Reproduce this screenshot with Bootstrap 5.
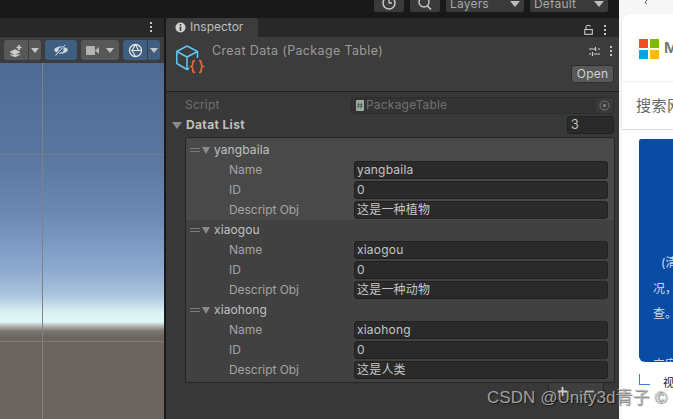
<!DOCTYPE html>
<html lang="en">
<head>
<meta charset="utf-8">
<title>Inspector</title>
<link rel="stylesheet" href="https://cdn.jsdelivr.net/npm/bootstrap@5.3.0/dist/css/bootstrap.min.css">
<style>
html,body{margin:0;height:419px;overflow:hidden}
body{background:#191919;font:12px/1.2 Inter,"Noto Sans CJK SC",sans-serif;color:#b8b8b8;position:relative;letter-spacing:.2px}
.ed{width:619px;height:419px;flex:none}
.topb{height:18px;padding-right:11px;gap:6px;flex:none}
.tb{height:12px;background:#3a3a3a;border-radius:0 0 2px 2px;overflow:hidden;color:#a8a8a8;display:flex;justify-content:space-between;line-height:8px;padding:0 4px;align-items:flex-start}
.tb-i{width:30px;justify-content:center}
.tb-d{width:78px;padding-top:0}
.tri{width:0;height:0;border-left:5px solid transparent;border-right:5px solid transparent;border-top:6px solid #bcbcbc;display:inline-block;flex:none}
.tb .tri{margin-top:1px}
.panes{flex:1;min-height:0;gap:2px}
.scene{width:164px;flex:none;background:#282828}
.tabbar{height:19px;background:#282828;border-radius:3px 3px 0 0;flex:none}
.s-tab{border-bottom:1px solid #222;padding-right:12px}
.dots{display:flex;flex-direction:column;gap:2px;width:2px}
.dots i{width:2px;height:2px;background:#c4c4c4;display:block}
.s-tools{height:26px;background:#3c3c3c;padding:3px 4px;gap:4px;flex:none;border-bottom:0}
.sb{height:20px;border-radius:3px;background:#585858;display:flex;align-items:center}
.sb-blue{background:#3f5f80}
.sb-a{width:25px;justify-content:center;border-right:1px solid #3c3c3c;height:100%;display:flex;align-items:center}
.sb-b{flex:1;display:flex;justify-content:center}
.sb .tri{border-top-color:#c4c4c4;border-left-width:4px;border-right-width:4px;border-top-width:5px}
.sb-w37{width:37px}
.sb-w32{width:32px}
.sb-cam{width:38px;padding-left:5px;gap:7px}
.sky{flex:1;background:
 linear-gradient(#7f8388,#7f8388) 42px 0/1px 100% no-repeat,
 linear-gradient(#6f7f90,#6f7f90) 0 91px/100% 1px no-repeat,
 linear-gradient(#837b74,#837b74) 0 278px/100% 1px no-repeat,
 linear-gradient(#4f6a92 0,#5a769f 91px,#6a88b3 150px,#8ba8cf 205px,#aac4dd 232px,#dcf2f3 250px,#e0f5f5 259px,#b3b8b3 263px,#7c7670 268px,#6c645e 274px,#6c645e 100%)}
.insp{width:453px;flex:none;background:#282828;display:flex;flex-direction:column}
.tab-i{width:92px;height:19px;background:#3c3c3c;border-radius:3px 3px 0 0;color:#bdbdbd;gap:4px;padding-left:9px;display:flex;align-items:center;font-size:12px;letter-spacing:0}
.tab-r{gap:11px;padding:6px 13px 0 0}
.ihead{height:55px;background:#3c3c3c;border-bottom:1px solid #1f1f1f;padding:0 5px 0 10px;flex:none}
.ico{width:30px;flex:none;margin-top:7px}
.ttl{margin-left:6px;padding-top:6px;color:#9b9b9b;font-size:12.5px;letter-spacing:.35px;flex:1}
.hd-r{width:60px}
.hd-ic{gap:10px;padding:8px 2px 0 0;height:20px}
.btn-open{height:18px;width:43px;background:#585858;border:1px solid #2f2f2f;color:#d0d0d0;font-size:12px;line-height:14px;padding:0;border-radius:3px;margin-top:8px;letter-spacing:.2px}
.ibody{flex:1;background:#383838;padding:5px 5px 0 19px;min-height:0}
.script{height:16px;color:#707070;margin-bottom:2px}
.lbl-s{width:166px;flex:none;line-height:16px}
.s-f{flex:1;background:#333;border:1px solid #2d2d2d;border-radius:3px;height:17px;display:flex;align-items:center;padding-left:3px;color:#707070;gap:1px}
.s-dot{margin-left:auto;width:17px;height:15px;background:#3a3a3a;display:flex;align-items:center;justify-content:center}
.dl{height:20px;margin-left:-13px}
.dl .tri{border-top-color:#8a8a8a;border-top-width:7px}
.dl-t{font-weight:700;color:#c0c0c0;margin-left:4px;letter-spacing:.35px}
.cnt{margin-left:auto;width:47px;height:18px;background:#2a2a2a;border:1px solid #212121;border-radius:3px;padding-left:3px;line-height:16px;color:#c4c4c4;font-size:12.5px}
.lbox{height:246px;margin-top:2px;border:1px solid #252525;border-radius:3px;background:#414141;width:430px;overflow:hidden;padding-top:2px;box-sizing:border-box}
.grp{height:80px}
.grp1{background:#494949;margin-top:-2px;padding-top:2px;height:82px}
.hrow{height:20px;padding-left:4px;color:#c0c0c0;letter-spacing:.1px}
.grip{width:10px;height:4px;border-top:1px solid #7a7a7a;border-bottom:1px solid #7a7a7a;flex:none}
.hrow .tri{border-left-width:4px;border-right-width:4px;border-top:7px solid #8a8a8a;margin:0 4px 0 2px}
.frow{height:20px;padding-left:43px;color:#a4a4a4;letter-spacing:-.05px}
.flbl{width:125px;flex:none}
.fin{width:254px;height:18px;background:#2a2a2a;border:1px solid #212121;border-radius:3px;padding-left:2px;line-height:16px;color:#c4c4c4;letter-spacing:.2px}
.foot{width:56px;height:18px;margin-left:363px;border:1px solid #252525;border-top:0;border-radius:0 0 3px 3px;background:#3f3f3f}
.web{flex:1;background:#f7f7f7;min-width:0;overflow:hidden;padding:0 0 0 3px}
.web-nav{height:14px;flex:none;padding-left:22px}
.web-top{height:115px;background:#fff;border-radius:8px 0 0 0;box-shadow:0 1px 2px rgba(0,0,0,.18);flex:none}
.logo-r{height:68px;padding-left:17px;border-bottom:1px solid #eee;gap:5px;color:#737373;font-size:15px;font-weight:600}
.ms{display:grid;grid-template-columns:9px 9px;gap:2px;flex:none;margin-top:2px}
.ms i{display:block;width:9px;height:9px}
.ms-r{background:#f25022}
.ms-g{background:#7fba00}
.ms-b{background:#00a4ef}
.ms-y{background:#ffb900}
.search{padding:15px 0 0 14px;font-size:15px;color:#666;white-space:nowrap;letter-spacing:.5px}
.web-mid{background:#fff;flex:1;margin-top:1px;padding:9px 0 0 17px;min-height:0}
.bluec{height:223px;background:#0a4ca3;border-radius:2px 0 0 6px;color:#c9dcef;padding:111px 0 0 14px;font-size:12px;line-height:25.5px;white-space:nowrap;overflow:hidden;letter-spacing:0;flex:none}
.blue-1{margin-left:8px}
.leg{height:46px;margin-top:12px;color:#222;font-size:11px;gap:13px;white-space:nowrap}
.leg-t{margin-top:3px}
.crn{width:11px;height:11px;border-left:1px solid #3b82d8;border-bottom:1px solid #3b82d8;flex:none}
.wm{position:absolute;left:487px;top:388px;font:17px/1.2 "Liberation Sans","Noto Sans CJK SC",sans-serif;color:rgba(190,190,190,.82);text-shadow:1px 1px 1px rgba(0,0,0,.55);white-space:nowrap;letter-spacing:.05px}
</style>
</head>
<body class="d-flex">
<div class="ed d-flex flex-column">
  <div class="topb d-flex justify-content-end">
    <div class="tb tb-i"><svg width="16" height="12" viewBox="0 0 16 12"><circle cx="8" cy="3" r="6" fill="none" stroke="#c8c8c8" stroke-width="1.5"/><path d="M8 0v3h3" fill="none" stroke="#c8c8c8" stroke-width="1.3"/></svg></div>
    <div class="tb tb-i"><svg width="16" height="12" viewBox="0 0 16 12"><circle cx="7" cy="2" r="5" fill="none" stroke="#c8c8c8" stroke-width="1.4"/><path d="M10.5 6l3.5 3.5" stroke="#c8c8c8" stroke-width="1.6"/></svg></div>
    <div class="tb tb-d"><span>Layers</span><span class="tri"></span></div>
    <div class="tb tb-d"><span>Default</span><span class="tri"></span></div>
  </div>
  <div class="panes d-flex">
    <div class="scene d-flex flex-column">
      <div class="tabbar s-tab d-flex justify-content-end align-items-center"><div class="dots"><i></i><i></i><i></i></div></div>
      <div class="s-tools d-flex">
        <div class="sb sb-w37"><span class="sb-a"><svg width="14" height="13" viewBox="0 0 14 13"><path d="M1 8l5-2.5L11 8l-5 2.500zM1 10.500l5 2.500 5-2.500" fill="#cfcfcf" stroke="#cfcfcf" stroke-width=".6"/><path d="M10 1v5M7.500 3.500h5" stroke="#cfcfcf" stroke-width="1.600"/></svg></span><span class="sb-b"><span class="tri"></span></span></div>
        <div class="sb sb-blue sb-w32 justify-content-center"><svg width="16" height="12" viewBox="0 0 16 12"><path d="M1 6c3-5 11-5 14 0-3 5-11 5-14 0z" fill="#cfd6dd"/><circle cx="8" cy="6" r="2.500" fill="#3f5f80"/><path d="M3 11L12 1" stroke="#3f5f80" stroke-width="2.500"/><path d="M2.500 11.500L12 1" stroke="#dfe4ea" stroke-width="1"/></svg></div>
        <div class="sb sb-cam"><svg width="13" height="9" viewBox="0 0 13 9"><rect width="9" height="9" rx="1" fill="#b4b4b4"/><path d="M9 4.500L13 1v7z" fill="#b4b4b4"/></svg><span class="tri"></span></div>
        <div class="sb sb-blue sb-w37"><span class="sb-a"><svg width="15" height="15" viewBox="0 0 15 15"><circle cx="7.500" cy="7.500" r="6" fill="none" stroke="#e8e8e8" stroke-width="1.300"/><path d="M7.500 1.500L4 7.500l3.500 6M4 7.500h9.500M7.500 1.500l3 6" fill="none" stroke="#e8e8e8" stroke-width="1.100"/></svg></span><span class="sb-b"><span class="tri"></span></span></div>
      </div>
      <div class="sky"></div>
    </div>
    <div class="insp">
      <div class="tabbar d-flex justify-content-between align-items-start">
        <div class="tab-i"><svg width="11" height="11" viewBox="0 0 11 11"><circle cx="5.500" cy="5.500" r="5" fill="#d2d2d2"/><rect x="4.700" y="2" width="1.600" height="1.600" fill="#3c3c3c"/><rect x="4.700" y="4.500" width="1.600" height="4.500" fill="#3c3c3c"/></svg><span>Inspector</span></div>
        <div class="tab-r d-flex align-items-center"><svg width="9" height="11" viewBox="0 0 9 11"><path d="M2 5V3c0-2.300 4-2.300 4.500-.5" fill="none" stroke="#c8c8c8" stroke-width="1.100"/><rect x=".8" y="5.500" width="7.500" height="4.800" fill="none" stroke="#c8c8c8" stroke-width="1.100"/></svg><div class="dots"><i></i><i></i><i></i></div></div>
      </div>
      <div class="ihead d-flex">
        <div class="ico"><svg width="30" height="30" viewBox="0 0 30 30"><path d="M11 2l10.500 5.500v12L11 25.500.8 19.500V7.500zM.8 7.500L11 13l10.500-5.500M11 13v12.500" fill="none" stroke="#62c8f2" stroke-width="1.500" stroke-linejoin="round"/><rect x="13" y="14" width="17" height="16" fill="#3c3c3c"/><path d="M19 16.500c-2 0-2.300 1-2.300 2.500v1.500c0 1-.5 1.500-1.700 2 1.200.5 1.700 1 1.700 2V26c0 1.500.3 2.500 2.300 2.500M23 16.500c2 0 2.300 1 2.300 2.500v1.500c0 1 .5 1.500 1.700 2-1.200.5-1.700 1-1.700 2V26c0 1.500-.3 2.500-2.300 2.500" fill="none" stroke="#f0653a" stroke-width="1.700"/></svg></div>
        <div class="ttl">Creat Data (Package Table)</div>
        <div class="hd-r d-flex flex-column align-items-end">
          <div class="hd-ic d-flex align-items-center"><svg width="11" height="11" viewBox="0 0 11 11"><path d="M0 3h6M9 3h2M0 8h2M5 8h6M6.500 1v4M3.500 6v4" stroke="#d0d0d0" stroke-width="1.200" fill="none"/></svg><div class="dots"><i></i><i></i><i></i></div></div>
          <button class="btn btn-open" type="button">Open</button>
        </div>
      </div>
      <div class="ibody">
        <div class="script d-flex">
          <div class="lbl-s">Script</div>
          <div class="s-f"><svg width="10" height="11" viewBox="0 0 10 11"><rect x="1" width="8" height="11" rx="1" fill="#a8a8a8"/><path d="M3.500 2.500l-.5 6M6.500 2.500l-.5 6M2.500 4.500h5M2.500 6.500h5" stroke="#2f6a3f" stroke-width=".9"/></svg><span>PackageTable</span><span class="s-dot"><svg width="11" height="11" viewBox="0 0 11 11"><circle cx="5.500" cy="5.500" r="4.500" fill="none" stroke="#777" stroke-width="1"/><circle cx="5.500" cy="5.500" r="1.800" fill="#777"/></svg></span></div>
        </div>
        <div class="dl d-flex align-items-center">
          <span class="tri"></span><span class="dl-t">Datat List</span><span class="cnt">3</span>
        </div>
        <div class="lbox">
          <div class="grp grp1">
            <div class="hrow d-flex align-items-center"><span class="grip"></span><span class="tri"></span>yangbaila</div>
            <div class="frow d-flex align-items-center"><span class="flbl">Name</span><span class="fin">yangbaila</span></div>
            <div class="frow d-flex align-items-center"><span class="flbl">ID</span><span class="fin">0</span></div>
            <div class="frow d-flex align-items-center"><span class="flbl">Descript Obj</span><span class="fin">这是一种植物</span></div>
          </div>
          <div class="grp">
            <div class="hrow d-flex align-items-center"><span class="grip"></span><span class="tri"></span>xiaogou</div>
            <div class="frow d-flex align-items-center"><span class="flbl">Name</span><span class="fin">xiaogou</span></div>
            <div class="frow d-flex align-items-center"><span class="flbl">ID</span><span class="fin">0</span></div>
            <div class="frow d-flex align-items-center"><span class="flbl">Descript Obj</span><span class="fin">这是一种动物</span></div>
          </div>
          <div class="grp">
            <div class="hrow d-flex align-items-center"><span class="grip"></span><span class="tri"></span>xiaohong</div>
            <div class="frow d-flex align-items-center"><span class="flbl">Name</span><span class="fin">xiaohong</span></div>
            <div class="frow d-flex align-items-center"><span class="flbl">ID</span><span class="fin">0</span></div>
            <div class="frow d-flex align-items-center"><span class="flbl">Descript Obj</span><span class="fin">这是人类</span></div>
          </div>
        </div>
        <div class="foot d-flex justify-content-around align-items-center"><svg width="9" height="9" viewBox="0 0 9 9"><path d="M4.500 0v9M0 4.500h9" stroke="#d0d0d0" stroke-width="1.800"/></svg><svg width="9" height="9" viewBox="0 0 9 9"><path d="M0 4.500h9" stroke="#b4b4b4" stroke-width="1.800"/></svg></div>
      </div>
    </div>
  </div>
</div>
<div class="web d-flex flex-column">
  <div class="web-nav"><svg width="5" height="4" viewBox="0 0 5 4" class="d-block"><path d="M3 0L1 2.500 3 4" fill="none" stroke="#555" stroke-width="1"/></svg></div>
  <div class="web-top">
    <div class="logo-r d-flex align-items-center"><span class="ms"><i class="ms-r"></i><i class="ms-g"></i><i class="ms-b"></i><i class="ms-y"></i></span><span>M</span></div>
    <div class="search">搜索网</div>
  </div>
  <div class="web-mid d-flex flex-column">
    <div class="bluec"><span class="blue-1">(清</span><br>况，<br>查。<br><br>立安</div>
    <div class="leg d-flex"><span class="crn"></span><span class="leg-t">视</span></div>
  </div>
</div>
<div class="wm">CSDN @Unity3d青子 ©</div>
<script src="https://cdn.jsdelivr.net/npm/bootstrap@5.3.0/dist/js/bootstrap.bundle.min.js"></script>
</body>
</html>
